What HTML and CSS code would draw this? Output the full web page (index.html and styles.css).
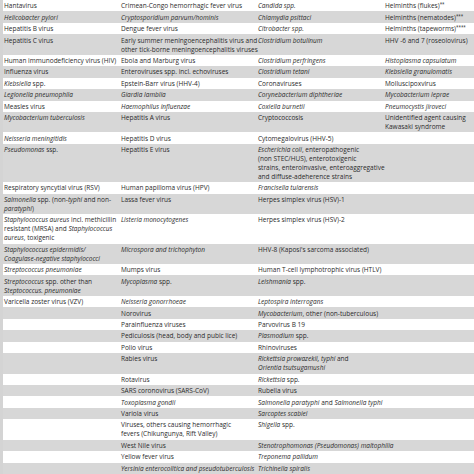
FILE: index.html
```html
<!DOCTYPE html>
<html lang="en">
<head>
<meta charset="utf-8">
<title>Pathogens</title>
<link rel="stylesheet" href="styles.css">
</head>
<body>
<div class="page">
<table class="pathogens">
<colgroup>
<col class="c1"><col class="c2"><col class="c3"><col class="c4">
</colgroup>
<tbody>
<tr><td>Hantavirus</td><td>Crimean-Congo hemorrhagic fever virus</td><td><i>Candida spp.</i></td><td>Helminths (flukes)<sup>**</sup></td></tr>
<tr><td><i>Helicobacter pylori</i></td><td><i>Cryptosporidium parvum/hominis</i></td><td><i>Chlamydia psittaci</i></td><td>Helminths (nematodes)<sup>***</sup></td></tr>
<tr><td>Hepatitis B virus</td><td>Dengue fever virus</td><td><i>Citrobacter spp.</i></td><td>Helminths (tapeworms)<sup>****</sup></td></tr>
<tr><td>Hepatitis C virus</td><td>Early summer meningoencephalitis virus and<br>other tick-borne meningoencephalitis viruses</td><td><i>Clostridium botulinum</i></td><td>HHV -6 and 7 (roseolovirus)</td></tr>
<tr><td>Human immunodeficiency virus (HIV)</td><td>Ebola and Marburg virus</td><td><i>Clostridium perfringens</i></td><td><i>Histoplasma capsulatum</i></td></tr>
<tr><td>Influenza virus</td><td>Enteroviruses spp. incl. echoviruses</td><td><i>Clostridium tetani</i></td><td><i>Klebsiella granulomatis</i></td></tr>
<tr><td><i>Klebsiella</i> spp.</td><td>Epstein-Barr virus (HHV-4)</td><td>Coronaviruses</td><td>Molluscipoxvirus</td></tr>
<tr><td><i>Legionella pneumophila</i></td><td><i>Giardia lamblia</i></td><td><i>Corynebacterium diphtheriae</i></td><td><i>Mycobacterium leprae</i></td></tr>
<tr><td>Measles virus</td><td><i>Haemophilus influenzae</i></td><td><i>Coxiella burnetii</i></td><td><i>Pneumocystis jiroveci</i></td></tr>
<tr><td><i>Mycobacterium tuberculosis</i></td><td>Hepatitis A virus</td><td>Cryptococcosis</td><td>Unidentified agent causing<br>Kawasaki syndrome</td></tr>
<tr><td><i>Neisseria meningitidis</i></td><td>Hepatitis D virus</td><td>Cytomegalovirus (HHV-5)</td><td></td></tr>
<tr><td><i>Pseudomonas</i> ssp.</td><td>Hepatitis E virus</td><td><i>Escherichia coli</i>, enteropathogenic<br>(non STEC/HUS), enterotoxigenic<br>strains, enteroinvasive, enteroaggregative<br>and diffuse-adeherence strains</td><td></td></tr>
<tr><td>Respiratory syncytial virus (RSV)</td><td>Human papilloma virus (HPV)</td><td><i>Francisella tularensis</i></td><td></td></tr>
<tr><td><i>Salmonella</i> spp. (non-<i>typhi</i> and non-<br><i>paratyphi</i>)</td><td>Lassa fever virus</td><td>Herpes simplex virus (HSV)-1</td><td></td></tr>
<tr><td><i>Staphylococcus aureus</i> incl. methicillin<br>resistant (MRSA) and <i>Staphylococcus</i><br><i>aureus</i>, toxigenic</td><td><i>Listeria monocytogenes</i></td><td>Herpes simplex virus (HSV)-2</td><td></td></tr>
<tr><td><i>Staphylococcus epidermidis/<br>Coagulase-negative staphylococci</i></td><td><i>Microspora and trichophyton</i></td><td>HHV-8 (Kaposi's sarcoma associated)</td><td></td></tr>
<tr><td><i>Streptococcus pneumoniae</i></td><td>Mumps virus</td><td>Human T-cell lymphotrophic virus (HTLV)</td><td></td></tr>
<tr><td><i>Streptococcus</i> spp. other than<br><i>Steptococcus. pneumoniae</i></td><td><i>Mycoplasma</i> spp.</td><td><i>Leishmania</i> spp.</td><td></td></tr>
<tr><td>Varicella zoster virus (VZV)</td><td><i>Neisseria gonorrhoeae</i></td><td><i>Leptospira interrogans</i></td><td></td></tr>
<tr><td></td><td>Norovirus</td><td><i>Mycobacterium</i>, other (non-tuberculous)</td><td></td></tr>
<tr><td></td><td>Parainfluenza viruses</td><td>Parvovirus B 19</td><td></td></tr>
<tr><td></td><td>Pediculosis (head, body and pubic lice)</td><td><i>Plasmodium</i> spp.</td><td></td></tr>
<tr><td></td><td>Polio virus</td><td>Rhinoviruses</td><td></td></tr>
<tr><td></td><td>Rabies virus</td><td><i>Rickettsia prowazekii, typhi</i> and<br><i>Orientia tsutsugamushi</i></td><td></td></tr>
<tr><td></td><td>Rotavirus</td><td><i>Rickettsia</i> spp.</td><td></td></tr>
<tr><td></td><td>SARS coronovirus (SARS-CoV)</td><td>Rubella virus</td><td></td></tr>
<tr><td></td><td><i>Toxoplasma gondii</i></td><td><i>Salmonella paratyphi</i> and <i>Salmonella typhi</i></td><td></td></tr>
<tr><td></td><td>Variola virus</td><td><i>Sarcoptes scabiei</i></td><td></td></tr>
<tr><td></td><td>Viruses, others causing hemorrhagic<br>fevers (Chikungunya, Rift Valley)</td><td><i>Shigella</i> spp.</td><td></td></tr>
<tr><td></td><td>West Nile virus</td><td><i>Stenotrophomonas (Pseudomonas) maltophilia</i></td><td></td></tr>
<tr><td></td><td>Yellow fever virus</td><td><i>Treponema pallidum</i></td><td></td></tr>
<tr><td></td><td><i>Yersinia enterocolitica and pseudotuberculosis</i></td><td><i>Trichinella spiralis</i></td><td></td></tr>
</tbody>
</table>
</div>
</body>
</html>
```
FILE: styles.css
```css
html, body {
  margin: 0;
  padding: 0;
  background: #ffffff;
  overflow: hidden;
  width: 474px;
  height: 474px;
}

.page {
  position: relative;
  height: 474px;
  overflow: hidden;
  border-left: 3px solid #d4d4d4;
  box-sizing: border-box;
}

.page::after {
  content: "";
  position: absolute;
  left: -3px;
  bottom: 0;
  width: 3px;
  height: 7px;
  background: #444;
}

.pathogens {
  border-collapse: collapse;
  table-layout: fixed;
  width: 471px;
  font-family: "Open Sans", "Noto Sans", sans-serif;
  font-size: 6.5px;
  line-height: 9px;
  color: #2b2b2b;
}

.pathogens .c1 { width: 117px; }
.pathogens .c2 { width: 137px; }
.pathogens .c3 { width: 127px; }
.pathogens .c4 { width: 90px; }

.pathogens td {
  padding: 1.23px 0 1.23px 1px;
  vertical-align: top;
  white-space: nowrap;
}

.pathogens tr:nth-child(even) td {
  background: #d7d7d7;
}

.pathogens sup {
  font-size: 4.5px;
  line-height: 0;
  vertical-align: 2px;
}
```
